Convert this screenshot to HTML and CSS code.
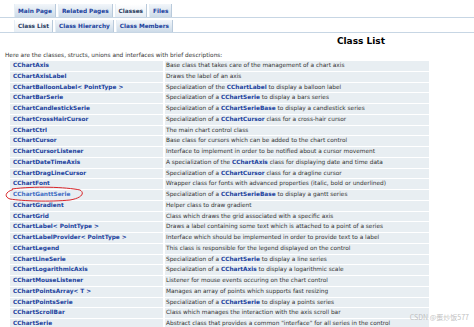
FILE: index.html
```html
<!DOCTYPE html>
<html lang="en">
<head>
<meta charset="UTF-8">
<title>Class List</title>
<link rel="stylesheet" href="styles.css">
</head>
<body>
  <div class="tabs">
    <ul>
      <li><a href="#">Main Page</a></li>
      <li><a href="#">Related Pages</a></li>
      <li class="current"><a href="#">Classes</a></li>
      <li><a href="#">Files</a></li>
    </ul>
  </div>
  <div class="tabs tabs2">
    <ul>
      <li class="current"><a href="#">Class List</a></li>
      <li><a href="#">Class Hierarchy</a></li>
      <li><a href="#">Class Members</a></li>
    </ul>
  </div>
  <h1>Class List</h1>
  <p class="intro">Here are the classes, structs, unions and interfaces with brief descriptions:</p>
  <div class="list">
    <div class="key"><a href="#">CChartAxis</a></div><div class="val">Base class that takes care of the management of a chart axis</div>
    <div class="key"><a href="#">CChartAxisLabel</a></div><div class="val">Draws the label of an axis</div>
    <div class="key"><a href="#">CChartBalloonLabel&lt; PointType &gt;</a></div><div class="val">Specialization of the <a href="#">CChartLabel</a> to display a balloon label</div>
    <div class="key"><a href="#">CChartBarSerie</a></div><div class="val">Specialization of a <a href="#">CChartSerie</a> to display a bars series</div>
    <div class="key"><a href="#">CChartCandlestickSerie</a></div><div class="val">Specialization of a <a href="#">CChartSerieBase</a> to display a candlestick series</div>
    <div class="key"><a href="#">CChartCrossHairCursor</a></div><div class="val">Specialization of a <a href="#">CChartCursor</a> class for a cross-hair cursor</div>
    <div class="key"><a href="#">CChartCtrl</a></div><div class="val">The main chart control class</div>
    <div class="key"><a href="#">CChartCursor</a></div><div class="val">Base class for cursors which can be added to the chart control</div>
    <div class="key"><a href="#">CChartCursorListener</a></div><div class="val">Interface to implement in order to be notified about a cursor movement</div>
    <div class="key"><a href="#">CChartDateTimeAxis</a></div><div class="val">A specialization of the <a href="#">CChartAxis</a> class for displaying date and time data</div>
    <div class="key"><a href="#">CChartDragLineCursor</a></div><div class="val">Specialization of a <a href="#">CChartCursor</a> class for a dragline cursor</div>
    <div class="key"><a href="#">CChartFont</a></div><div class="val">Wrapper class for fonts with advanced properties (italic, bold or underlined)</div>
    <div class="key"><a class="visited" href="#">CChartGanttSerie</a></div><div class="val">Specialization of a <a href="#">CChartSerieBase</a> to display a gantt series</div>
    <div class="key"><a href="#">CChartGradient</a></div><div class="val">Helper class to draw gradient</div>
    <div class="key"><a href="#">CChartGrid</a></div><div class="val">Class which draws the grid associated with a specific axis</div>
    <div class="key"><a href="#">CChartLabel&lt; PointType &gt;</a></div><div class="val">Draws a label containing some text which is attached to a point of a series</div>
    <div class="key"><a href="#">CChartLabelProvider&lt; PointType &gt;</a></div><div class="val">Interface which should be implemented in order to provide text to a label</div>
    <div class="key"><a href="#">CChartLegend</a></div><div class="val">This class is responsible for the legend displayed on the control</div>
    <div class="key"><a href="#">CChartLineSerie</a></div><div class="val">Specialization of a <a href="#">CChartSerie</a> to display a line series</div>
    <div class="key"><a href="#">CChartLogarithmicAxis</a></div><div class="val">Specialization of a <a href="#">CChartAxis</a> to display a logarithmic scale</div>
    <div class="key"><a href="#">CChartMouseListener</a></div><div class="val">Listener for mouse events occuring on the chart control</div>
    <div class="key"><a href="#">CChartPointsArray&lt; T &gt;</a></div><div class="val">Manages an array of points which supports fast resizing</div>
    <div class="key"><a href="#">CChartPointsSerie</a></div><div class="val">Specialization of a <a href="#">CChartSerie</a> to display a points series</div>
    <div class="key"><a href="#">CChartScrollBar</a></div><div class="val">Class which manages the interaction with the axis scroll bar</div>
    <div class="key"><a href="#">CChartSerie</a></div><div class="val">Abstract class that provides a common "interface" for all series in the control</div>
  </div>
  <svg class="circle" width="80" height="16" viewBox="0 0 80 16">
    <path d="M8 3 C30 0 62 1 76 4 C81 7 78 12 66 14 C46 16 18 15 6 13 C0 11 1 6 9 3.5" fill="none" stroke="#d8262a" stroke-width="1"/>
  </svg>
  <div class="mark">CSDN @蛋炒饭577</div>
</body>
</html>
```
FILE: styles.css
```css
html {
  overflow: hidden;
}

body {
  margin: 0;
  width: 474px;
  height: 327px;
  position: relative;
  overflow: hidden;
  font-family: "DejaVu Sans", Verdana, sans-serif;
  font-size: 5.8px;
  color: #222;
  background: #fff;
}

a {
  color: #1a419d;
  font-weight: bold;
  text-decoration: none;
}

.tabs {
  padding: 4px 0 0 14px;
  border-bottom: 1px solid #c7d6e4;
}

.tabs ul {
  display: flex;
  gap: 2px;
  margin: 0;
  padding: 0;
  list-style: none;
}

.tabs li {
  height: 13px;
  display: flex;
  align-items: center;
  padding: 0 3px;
  background: linear-gradient(#f2f6fa, #cddbe8);
  border-left: 1px solid #e6eef5;
  border-right: 1px solid #b9cadb;
}

.tabs li a {
  color: #1a419d;
}

.tabs li.current {
  background: linear-gradient(#ffffff, #e6edf4);
}

.tabs li.current a {
  color: #283a5d;
}

.tabs2 {
  padding-top: 2px;
}

.tabs2 li {
  height: 12px;
}

h1 {
  margin: 2px 0 0;
  padding-right: 89px;
  text-align: right;
  font-size: 9px;
  line-height: 12px;
  color: #000;
}

.intro {
  margin: 5px 0 0 5px;
  line-height: 7px;
  color: #333;
}

.list {
  display: grid;
  grid-template-columns: 153px 264px;
  grid-auto-rows: 9.75px;
  gap: 1px 2px;
  margin: 2px 0 0 10px;
}

.key,
.val {
  background: #e8eef2;
  line-height: 9.75px;
  white-space: nowrap;
  overflow: hidden;
}

.key {
  padding-left: 3px;
}

.val {
  padding-left: 1px;
  color: #333;
}

.key a.visited {
  color: #3c6cc4;
}

.circle {
  position: absolute;
  left: 4px;
  top: 186px;
}

.mark {
  position: absolute;
  right: 5px;
  bottom: 5px;
  font-family: "Noto Sans CJK SC", sans-serif;
  font-size: 7px;
  color: rgba(180, 180, 180, 0.85);
}
```
